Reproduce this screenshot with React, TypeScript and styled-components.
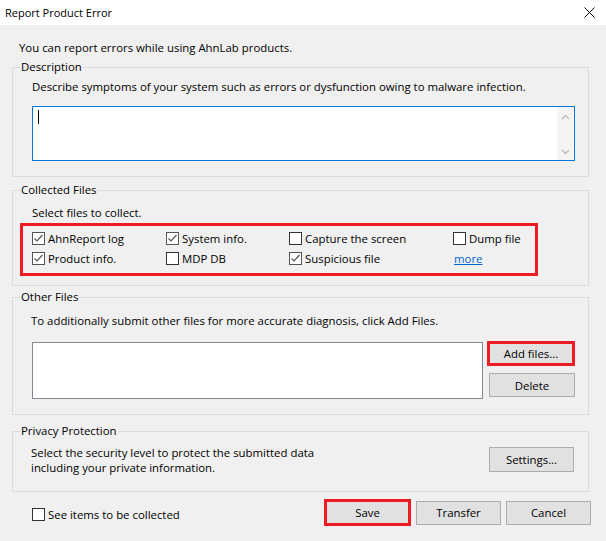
import React from "react";
import styled, { createGlobalStyle } from "styled-components";

const FONT = `"Open Sans", "Noto Sans", "Liberation Sans", sans-serif`;

const Global = createGlobalStyle`
  html, body { margin: 0; padding: 0; background: #f0f0f0; }
  #root { width: 606px; height: 541px; }
  * { box-sizing: border-box; }
`;

const Window = styled.div`
  width: 606px;
  height: 541px;
  background: #f0f0f0;
  overflow: hidden;
  font-family: ${FONT};
  font-size: 11.4px;
  color: #000;
  display: flex;
  flex-direction: column;
`;

const TitleBar = styled.div`
  height: 25px;
  flex-shrink: 0;
  background: #fff;
  display: flex;
  align-items: center;
  justify-content: space-between;
  padding-left: 5px;
`;

const Title = styled.div`
  font-size: 11px;
  line-height: 16px;
`;

const CloseBox = styled.div`
  width: 34px;
  height: 25px;
  display: flex;
  align-items: center;
  justify-content: center;
`;

const Body = styled.div`
  display: flex;
  flex-direction: column;
  padding: 15px 17px 0 12px;
`;

const Line = styled.div<{ $pl?: number }>`
  line-height: 16px;
  margin-left: ${(p) => p.$pl ?? 0}px;
  white-space: nowrap;
`;

const Group = styled.fieldset<{ $mt: number }>`
  margin: ${(p) => p.$mt}px 0 0;
  padding: 0;
  border: 1px solid #dcdcdc;
  min-width: 0;
`;

const Legend = styled.legend`
  margin-left: 7px;
  padding: 0 1px;
  line-height: 16px;
`;

const GroupBody = styled.div<{ $pt: number; $pb: number }>`
  padding: ${(p) => p.$pt}px 13px ${(p) => p.$pb}px 19px;
  display: flex;
  flex-direction: column;
`;

const TextArea = styled.div`
  margin-top: 11px;
  height: 55px;
  border: 1px solid #0078d7;
  background: #fff;
  display: flex;
`;

const TextContent = styled.div`
  flex: 1;
  padding: 3px 5px;
`;

const Caret = styled.span`
  display: block;
  width: 1px;
  height: 14px;
  background: #000;
`;

const ScrollStrip = styled.div`
  width: 17px;
  background: #f4f4f4;
  display: flex;
  flex-direction: column;
  align-items: center;
  justify-content: space-between;
  padding: 7px 0 5px;
`;

const RedFrame = styled.div`
  margin: 2px 0 0 -12px;
  width: 518px;
  height: 53px;
  border: 3px solid #ed1c24;
  padding: 2px 0 0 9px;
  display: grid;
  grid-template-columns: 134px 123px 164px auto;
  grid-auto-rows: 20px;
`;

const CheckItem = styled.label<{ $pt?: number }>`
  display: flex;
  align-items: center;
  gap: 3px;
  white-space: nowrap;
  padding-top: ${(p) => p.$pt ?? 0}px;
`;

const Box = styled.span<{ $on: boolean }>`
  width: 13px;
  height: 13px;
  flex-shrink: 0;
  background: #fff;
  border: 1px solid ${(p) => (p.$on ? "#555" : "#333")};
  display: flex;
  align-items: center;
  justify-content: center;
`;

const MoreLink = styled.a`
  color: #0066cc;
  text-decoration: underline;
  display: flex;
  align-items: center;
  padding-left: 1px;
`;

const FilesRow = styled.div`
  margin-top: 12px;
  display: flex;
  align-items: flex-start;
  gap: 4px;
`;

const ListBox = styled.div`
  margin-top: 1px;
  flex: 1;
  height: 57px;
  background: #fff;
  border: 1px solid #828790;
`;

const ButtonColumn = styled.div`
  width: 88px;
  display: flex;
  flex-direction: column;
  gap: 7px;
`;

const Button = styled.button<{ $w: number; $h?: number; $red?: boolean; $mx?: string }>`
  width: ${(p) => p.$w}px;
  height: ${(p) => p.$h ?? 24}px;
  margin: ${(p) => p.$mx ?? "0"};
  padding: 0;
  font-family: inherit;
  font-size: inherit;
  color: #000;
  background: #e1e1e1;
  border: ${(p) => (p.$red ? "3px solid #ed1c24" : "1px solid #adadad")};
  border-radius: 0;
  display: flex;
  align-items: center;
  justify-content: center;
  flex-shrink: 0;
`;

const PrivacyRow = styled.div`
  display: flex;
  justify-content: space-between;
  align-items: flex-start;
`;

const PrivacyText = styled.div`
  line-height: 15px;
  margin-left: -1px;
`;

const BottomRow = styled.div`
  margin: 7px -2px 0 0;
  padding-left: 20px;
  display: flex;
  align-items: center;
  justify-content: space-between;
`;

const ButtonGroup = styled.div`
  display: flex;
  align-items: center;
  gap: 5px;
`;

function Check({ on, label, pt }: { on: boolean; label: string; pt?: number }) {
  return (
    <CheckItem $pt={pt}>
      <Box $on={on}>
        {on && (
          <svg width="11" height="11" viewBox="0 0 11 11">
            <polyline points="1.5,5.5 4,8 9.5,2" fill="none" stroke="#555" strokeWidth="1.2" />
          </svg>
        )}
      </Box>
      <span>{label}</span>
    </CheckItem>
  );
}

function Chevron({ up }: { up: boolean }) {
  return (
    <svg width="9" height="6" viewBox="0 0 9 6">
      <polyline
        points={up ? "1,5 4.5,1.5 8,5" : "1,1 4.5,4.5 8,1"}
        fill="none"
        stroke="#bcbcbc"
        strokeWidth="1.4"
      />
    </svg>
  );
}

export default function App() {
  return (
    <>
      <Global />
      <Window>
        <TitleBar>
          <Title>Report Product Error</Title>
          <CloseBox>
            <svg width="11" height="11" viewBox="0 0 11 11">
              <path d="M0.5 0.5 L10.5 10.5 M10.5 0.5 L0.5 10.5" stroke="#000" strokeWidth="1" />
            </svg>
          </CloseBox>
        </TitleBar>
        <Body>
          <Line $pl={7}>You can report errors while using AhnLab products.</Line>

          <Group $mt={3}>
            <Legend>Description</Legend>
            <GroupBody $pt={4} $pb={15}>
              <Line>
                Describe symptoms of your system such as errors or dysfunction owing to malware infection.
              </Line>
              <TextArea>
                <TextContent>
                  <Caret />
                </TextContent>
                <ScrollStrip>
                  <Chevron up />
                  <Chevron up={false} />
                </ScrollStrip>
              </TextArea>
            </GroupBody>
          </Group>

          <Group $mt={5}>
            <Legend>Collected Files</Legend>
            <GroupBody $pt={7} $pb={9}>
              <Line>Select files to collect.</Line>
              <RedFrame>
                <Check on label="AhnReport log" />
                <Check on label="System info." />
                <Check on={false} label="Capture the screen" />
                <Check on={false} label="Dump file" />
                <Check on label="Product info." />
                <Check on={false} label="MDP DB" />
                <Check on label="Suspicious file" />
                <MoreLink href="#">more</MoreLink>
              </RedFrame>
            </GroupBody>
          </Group>

          <Group $mt={3}>
            <Legend>Other Files</Legend>
            <GroupBody $pt={8} $pb={15}>
              <Line $pl={-1}>To additionally submit other files for more accurate diagnosis, click Add Files.</Line>
              <FilesRow>
                <ListBox />
                <ButtonColumn>
                  <Button $w={88} $h={25} $red>
                    Add files...
                  </Button>
                  <Button $w={86} $mx="0 0 0 2px">
                    Delete
                  </Button>
                </ButtonColumn>
              </FilesRow>
            </GroupBody>
          </Group>

          <Group $mt={8}>
            <Legend>Privacy Protection</Legend>
            <GroupBody $pt={6} $pb={16}>
              <PrivacyRow>
                <PrivacyText>
                  Select the security level to protect the submitted data
                  <br />
                  including your private information.
                </PrivacyText>
                <Button $w={85} $h={25} $mx="2px 1px 0 0">
                  Settings...
                </Button>
              </PrivacyRow>
            </GroupBody>
          </Group>

          <BottomRow>
            <Check on={false} label="See items to be collected" pt={4} />
            <ButtonGroup>
              <Button $w={87} $h={27} $red>
                Save
              </Button>
              <Button $w={85}>Transfer</Button>
              <Button $w={85}>Cancel</Button>
            </ButtonGroup>
          </BottomRow>
        </Body>
      </Window>
    </>
  );
}
